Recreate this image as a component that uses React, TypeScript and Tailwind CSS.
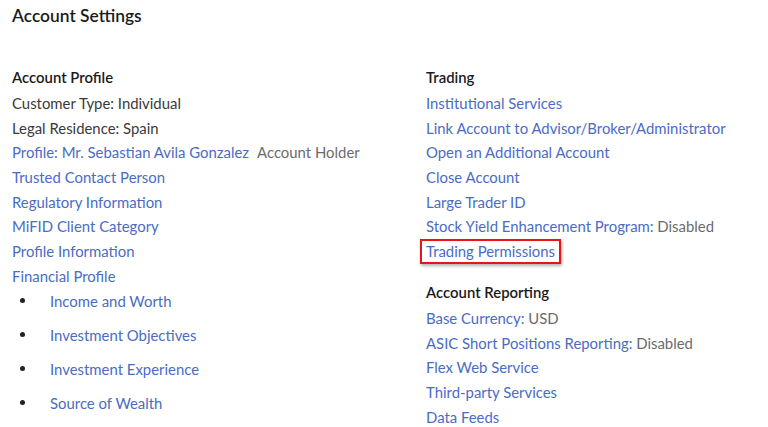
import React from "react";

const link = "text-[#4a6cc3]";
const muted = "text-[#6b6b6b]";

function Row({ children }: { children: React.ReactNode }) {
  return <div className="h-[24.7px] leading-[24.7px] whitespace-nowrap">{children}</div>;
}

function Heading({ children }: { children: React.ReactNode }) {
  return (
    <div className="h-[25px] leading-[22px] font-semibold text-[14.9px] text-[#1b1b1b]">
      {children}
    </div>
  );
}

export default function App() {
  const bullets = ["Income and Worth", "Investment Objectives", "Investment Experience", "Source of Wealth"];

  return (
    <div
      className="w-[768px] h-[427px] bg-white px-3 text-[14.9px] text-[#3a3a3a]"
      style={{ fontFamily: "Lato, 'Open Sans', sans-serif" }}
    >
      <h1 className="pt-[5px] h-[60px] text-[17.4px] leading-[22px] font-semibold text-[#1b1b1b]">
        Account Settings
      </h1>

      <div className="grid grid-cols-[414px_1fr] pt-[6px]">
        {/* left column */}
        <div>
          <Heading>Account Profile</Heading>
          <Row>Customer Type: Individual</Row>
          <Row>Legal Residence: Spain</Row>
          <Row>
            <span className={link}>Profile: Mr. Sebastian Avila Gonzalez</span>
            <span className={`${muted} ml-2`}>Account Holder</span>
          </Row>
          <Row><span className={link}>Trusted Contact Person</span></Row>
          <Row><span className={link}>Regulatory Information</span></Row>
          <Row><span className={link}>MiFID Client Category</span></Row>
          <Row><span className={link}>Profile Information</span></Row>
          <Row><span className={link}>Financial Profile</span></Row>
          <ul className="flex flex-col gap-[9.3px]">
            {bullets.map((b) => (
              <li key={b} className="flex items-center h-[24.7px]">
                <span className="w-[38px] pl-[8px]">
                  <span className="block w-[5px] h-[5px] rounded-full bg-[#222]" />
                </span>
                <span className={link}>{b}</span>
              </li>
            ))}
          </ul>
        </div>

        {/* right column */}
        <div>
          <Heading>Trading</Heading>
          <Row><span className={link}>Institutional Services</span></Row>
          <Row><span className={link}>Link Account to Advisor/Broker/Administrator</span></Row>
          <Row><span className={link}>Open an Additional Account</span></Row>
          <Row><span className={link}>Close Account</span></Row>
          <Row><span className={link}>Large Trader ID</span></Row>
          <Row>
            <span className={link}>Stock Yield Enhancement Program:</span>
            <span className={muted}> Disabled</span>
          </Row>
          <Row>
            <span className={`${link} -ml-[6px] inline-block h-[25px] leading-[21px] px-[4px] border-2 border-[#e8141b] shadow-[1px_2px_3px_rgba(0,0,0,0.3)]`}>
              Trading Permissions
            </span>
          </Row>
          <div className="h-[17px]" />
          <Heading>Account Reporting</Heading>
          <Row>
            <span className={link}>Base Currency:</span>
            <span className={muted}> USD</span>
          </Row>
          <Row>
            <span className={link}>ASIC Short Positions Reporting:</span>
            <span className={muted}> Disabled</span>
          </Row>
          <Row><span className={link}>Flex Web Service</span></Row>
          <Row><span className={link}>Third-party Services</span></Row>
          <Row><span className={link}>Data Feeds</span></Row>
        </div>
      </div>
    </div>
  );
}
